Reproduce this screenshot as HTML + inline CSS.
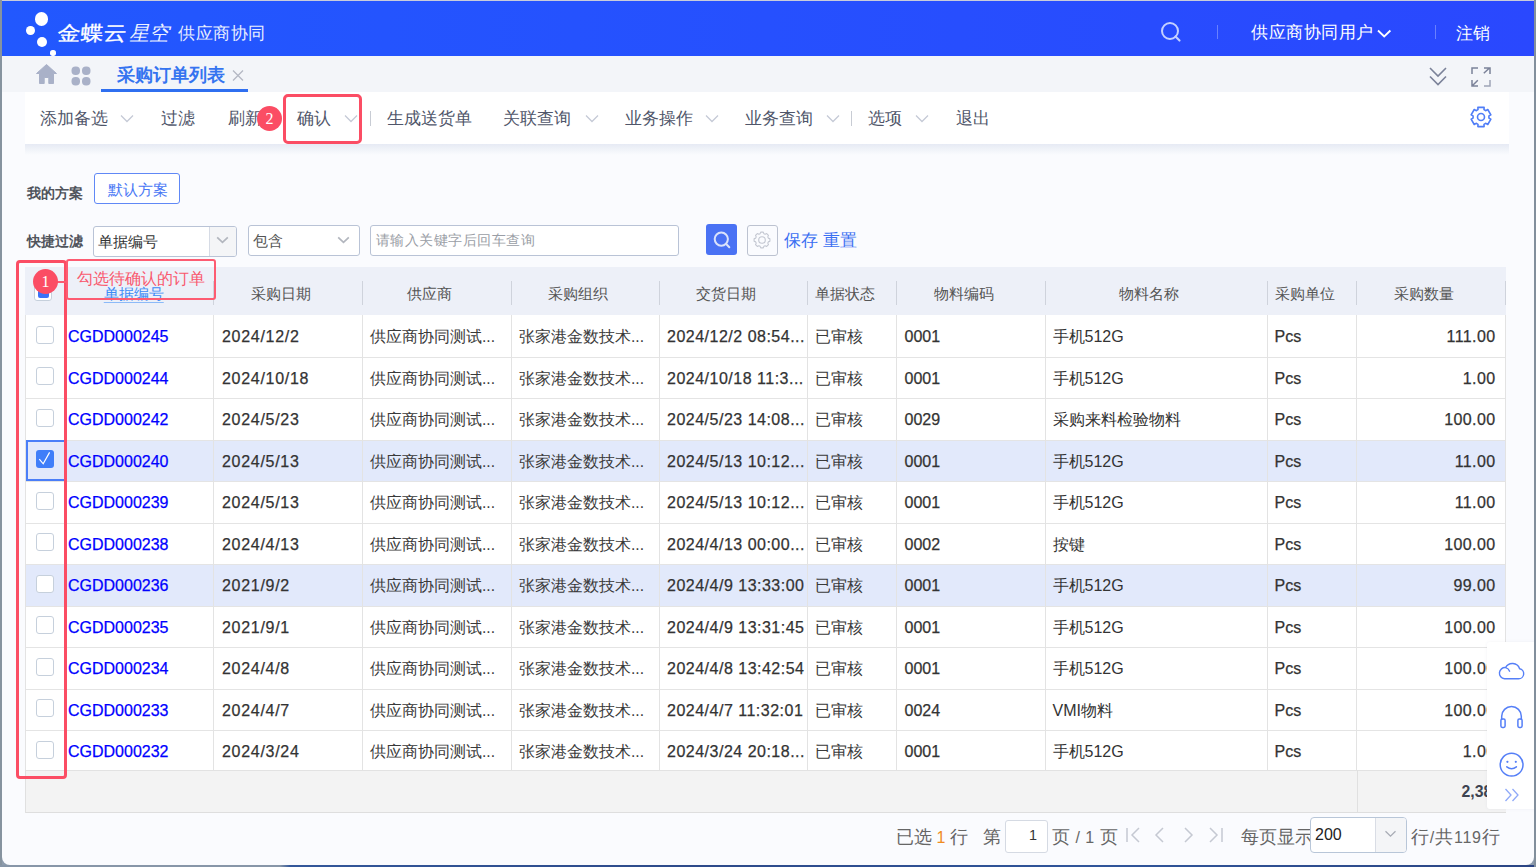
<!DOCTYPE html>
<html><head><meta charset="utf-8">
<style>
html,body{margin:0;padding:0;width:1536px;height:867px;overflow:hidden;}
body{background:#8e9cad;font-family:"Liberation Sans",sans-serif;color:#333;position:relative;}
.a{position:absolute;white-space:nowrap;}
#topstrip{left:0;top:0;width:1536px;height:1px;background:#c9ccdb;}
#leftstrip{left:0;top:0;width:2px;height:867px;background:#86939f;}
#win{left:2px;top:1px;width:1532px;height:864px;background:#fafbfe;border-radius:0 0 8px 8px;overflow:hidden;}
#hdr{left:2px;top:1px;width:1532px;height:55px;background:linear-gradient(90deg,#2258fe,#2a48fe);}
.dot{position:absolute;background:#fff;border-radius:50%;}
.wt{color:#fff;}
#tabbar{left:2px;top:56px;width:1532px;height:36px;background:#f3f5f9;}
#toolbar{left:25px;top:92px;width:1484px;height:52px;background:#fff;}
#tbshadow{left:25px;top:144px;width:1484px;height:11px;background:linear-gradient(180deg,#e6eaf4 0%,#eff2f8 45%,rgba(250,251,254,0) 100%);}
.tb{font-size:16.9px;line-height:20px;color:#50566a;top:108.5px;}
.chev{position:absolute;}
.th{top:283.5px;font-size:14.5px;line-height:20px;text-align:center;}
.td{font-size:15.7px;line-height:20px;}
.l16{font-size:16px;}
.lt{-webkit-text-stroke:0.25px currentColor;}
.pg{top:826.5px;font-size:17.5px;line-height:20px;color:#666;}
</style></head><body>
<div class="a" id="topstrip"></div>
<div class="a" id="leftstrip"></div>
<div class="a" id="win"></div>
<div class="a" id="hdr"></div>
<!-- logo -->
<div class="dot" style="left:34.7px;top:12.1px;width:13.6px;height:13.6px"></div>
<div class="dot" style="left:25.8px;top:26px;width:8.8px;height:8.8px"></div>
<div class="dot" style="left:36.6px;top:36.6px;width:10.2px;height:10.2px"></div>
<div class="dot" style="left:50.3px;top:50.2px;width:5.4px;height:5.4px"></div>
<div class="a wt" style="left:58px;top:21px;font-size:20px;line-height:24px;font-weight:500;-webkit-text-stroke:0.3px #fff;transform:scaleX(1.15) skewX(-5deg);transform-origin:0 50%">金蝶云</div>
<div class="a wt" style="left:129px;top:21px;font-size:20px;line-height:24px;font-style:italic;font-weight:300;color:#eef2ff">星空</div>
<div class="a" style="left:178px;top:21.5px;font-size:17.4px;line-height:22px;letter-spacing:0.6px;color:#e8eeff">供应商协同</div>
<!-- header right -->
<svg class="a" style="left:1158px;top:20px" width="26" height="24" viewBox="0 0 26 24"><circle cx="12" cy="11" r="8" fill="none" stroke="#c4d0ff" stroke-width="2"/><path d="M17.5 16.5 L21.5 20.5" stroke="#c4d0ff" stroke-width="2.2" stroke-linecap="round"/></svg>
<div class="a" style="left:1217px;top:25px;width:1px;height:14px;background:rgba(255,255,255,0.3)"></div>
<div class="a wt" style="left:1251px;top:21px;font-size:17.4px;line-height:22px;letter-spacing:0.5px">供应商协同用户</div>
<svg class="a" style="left:1376px;top:28px" width="17" height="11" viewBox="0 0 17 11"><path d="M2 2.5 L8.2 8.5 L14.4 2.5" fill="none" stroke="#fff" stroke-width="1.8"/></svg>
<div class="a" style="left:1435px;top:25px;width:1px;height:14px;background:rgba(255,255,255,0.3)"></div>
<div class="a wt" style="left:1456px;top:21.5px;font-size:17.3px;line-height:22px">注销</div>

<!-- tab bar -->
<div class="a" id="tabbar"></div>
<svg class="a" style="left:36px;top:64px" width="21" height="20" viewBox="0 0 21 20"><path d="M10.5 0.5 L20.5 9.5 L17.5 9.5 L17.5 19.5 L12.8 19.5 L12.8 13.5 L8.2 13.5 L8.2 19.5 L3.5 19.5 L3.5 9.5 L0.5 9.5 Z" fill="#a9b1c8" stroke="#a9b1c8" stroke-linejoin="round"/></svg>
<svg class="a" style="left:71px;top:65.5px" width="20" height="20" viewBox="0 0 20 20"><g fill="#a9b1c8"><rect x="0.5" y="0.5" width="8.5" height="8.5" rx="4"/><rect x="11" y="0.5" width="8.5" height="8.5" rx="4"/><rect x="0.5" y="11" width="8.5" height="8.5" rx="4"/><rect x="11" y="11" width="8.5" height="8.5" rx="4"/></g></svg>
<div class="a" style="left:117px;top:64px;font-size:18.2px;line-height:22px;font-weight:bold;color:#3574f0">采购订单列表</div>
<svg class="a" style="left:232px;top:70px" width="12" height="11" viewBox="0 0 12 11"><path d="M1 0.5 L11 10.5 M11 0.5 L1 10.5" stroke="#b4b8c4" stroke-width="1.3"/></svg>
<div class="a" style="left:101px;top:89px;width:147px;height:2.5px;background:#2f6ff0"></div>
<svg class="a" style="left:1429px;top:67px" width="18" height="19" viewBox="0 0 18 19"><path d="M1 1 L9 9 L17 1 M1 9.5 L9 17.5 L17 9.5" fill="none" stroke="#7b8299" stroke-width="1.6"/></svg>
<svg class="a" style="left:1471.2px;top:67.4px" width="20" height="20" viewBox="0 0 20 20"><g fill="none" stroke="#7b8299" stroke-width="1.5"><path d="M1 7 V1 H7 M13 1 H19 V7 M12.8 6.2 L18.2 1.2 M1 13 V19 H7 M1.8 18.2 L6.8 13.2"/><path d="M19 13 V19 H13" stroke="#9ea4b6"/></g></svg>

<!-- toolbar -->
<div class="a" id="tbshadow"></div>
<div class="a" id="toolbar"></div>
<div class="a tb" style="left:40px">添加备选</div>
<div class="a tb" style="left:161px">过滤</div>
<div class="a tb" style="left:228px">刷新</div>
<div class="a tb" style="left:297px">确认</div>
<div class="a" style="left:370px;top:111px;width:1px;height:15px;background:#c8ccd4"></div>
<div class="a tb" style="left:387px">生成送货单</div>
<div class="a tb" style="left:503px">关联查询</div>
<div class="a tb" style="left:625px">业务操作</div>
<div class="a tb" style="left:745px">业务查询</div>
<div class="a" style="left:851px;top:111px;width:1px;height:15px;background:#c8ccd4"></div>
<div class="a tb" style="left:868px">选项</div>
<div class="a tb" style="left:956px">退出</div>
<svg class="a" style="left:119.5px;top:113.5px" width="14" height="9" viewBox="0 0 14 9"><path d="M1 1.5 L7 7.5 L13 1.5" fill="none" stroke="#c5cad6" stroke-width="1.3"/></svg>
<svg class="a" style="left:344.0px;top:113.5px" width="14" height="9" viewBox="0 0 14 9"><path d="M1 1.5 L7 7.5 L13 1.5" fill="none" stroke="#c5cad6" stroke-width="1.3"/></svg>
<svg class="a" style="left:584.5px;top:113.5px" width="14" height="9" viewBox="0 0 14 9"><path d="M1 1.5 L7 7.5 L13 1.5" fill="none" stroke="#c5cad6" stroke-width="1.3"/></svg>
<svg class="a" style="left:704.5px;top:113.5px" width="14" height="9" viewBox="0 0 14 9"><path d="M1 1.5 L7 7.5 L13 1.5" fill="none" stroke="#c5cad6" stroke-width="1.3"/></svg>
<svg class="a" style="left:825.5px;top:113.5px" width="14" height="9" viewBox="0 0 14 9"><path d="M1 1.5 L7 7.5 L13 1.5" fill="none" stroke="#c5cad6" stroke-width="1.3"/></svg>
<svg class="a" style="left:914.5px;top:113.5px" width="14" height="9" viewBox="0 0 14 9"><path d="M1 1.5 L7 7.5 L13 1.5" fill="none" stroke="#c5cad6" stroke-width="1.3"/></svg>
<!--CHEVS-->
<!-- badge 2 + red box -->
<div class="a" style="left:283px;top:93.5px;width:73px;height:44.5px;border:3px solid #fb4d64;border-radius:5px"></div>
<div class="a" style="left:257px;top:106px;width:25px;height:25px;border-radius:50%;background:#fb4d64;color:#fff;font-family:'Liberation Serif',serif;font-size:16px;line-height:25px;text-align:center">2</div>
<!-- gear -->
<svg class="a" style="left:1468px;top:104.25px" width="26" height="26" viewBox="0 0 26 26"><path d="M22.88 15.10 L19.76 20.51 L17.93 19.30 L16.00 20.42 L16.12 22.61 L9.88 22.61 L10.00 20.42 L8.07 19.30 L6.24 20.51 L3.12 15.10 L5.08 14.11 L5.08 11.89 L3.12 10.90 L6.24 5.49 L8.07 6.70 L10.00 5.58 L9.88 3.39 L16.12 3.39 L16.00 5.58 L17.93 6.70 L19.76 5.49 L22.88 10.90 L20.92 11.89 L20.92 14.11 Z" fill="none" stroke="#4f7df7" stroke-width="1.6" stroke-linejoin="round"/><circle cx="13" cy="13" r="3.5" fill="none" stroke="#4f7df7" stroke-width="1.6"/></svg>

<!-- scheme -->
<div class="a" style="left:26.5px;top:182.5px;font-size:14px;line-height:20px;font-weight:bold;color:#50545c">我的方案</div>
<div class="a" style="left:94px;top:173px;width:84px;height:29px;border:1px solid #6088f6;border-radius:3px;background:#fff"></div>
<div class="a" style="left:107.5px;top:180px;font-size:14.6px;line-height:20px;color:#4a78f5">默认方案</div>
<!-- quick filter -->
<div class="a" style="left:26.5px;top:231px;font-size:14px;line-height:20px;font-weight:bold;color:#50545c">快捷过滤</div>
<div class="a" style="left:93px;top:226px;width:142px;height:29px;border:1px solid #b9c3d6;border-radius:3px;background:#fff;overflow:hidden"><div style="position:absolute;left:115px;top:0;width:27px;height:29px;background:#f4f5f7;border-left:1px solid #d6dbe5"></div></div>
<div class="a" style="left:98px;top:232px;font-size:14.6px;line-height:20px;color:#333">单据编号</div>
<svg class="a" style="left:216px;top:236px" width="13" height="8" viewBox="0 0 13 8"><path d="M1.2 1.3 L6.5 6.3 L11.8 1.3" fill="none" stroke="#b2b6be" stroke-width="1.7"/></svg>
<div class="a" style="left:248px;top:225px;width:110px;height:29px;border:1px solid #b9c3d6;border-radius:3px;background:#fff"></div>
<div class="a" style="left:253px;top:231px;font-size:14.6px;line-height:20px;color:#555">包含</div>
<svg class="a" style="left:337px;top:236px" width="13" height="8" viewBox="0 0 13 8"><path d="M1.2 1.3 L6.5 6.3 L11.8 1.3" fill="none" stroke="#b2b6be" stroke-width="1.7"/></svg>
<div class="a" style="left:370px;top:225px;width:307px;height:29px;border:1px solid #b9c3d6;border-radius:3px;background:#fff"></div>
<div class="a" style="left:375.5px;top:230px;font-size:14.1px;letter-spacing:0.5px;line-height:20px;color:#9a9ea6">请输入关键字后回车查询</div>
<div class="a" style="left:706.3px;top:224.4px;width:31px;height:31px;border-radius:3px;background:#4a72f4"></div>
<svg class="a" style="left:711px;top:229px" width="22" height="22" viewBox="0 0 22 22"><circle cx="10.3" cy="10.1" r="6.6" fill="none" stroke="#dbe3fb" stroke-width="2"/><path d="M15.2 15 L18.3 18.3" stroke="#dbe3fb" stroke-width="2" stroke-linecap="round"/></svg>
<div class="a" style="left:747px;top:224.5px;width:29px;height:29px;border:1.3px solid #bcc2d0;border-radius:3px;background:#fafbfe"></div>
<svg class="a" style="left:750.3px;top:228px" width="24" height="24" viewBox="0 0 24 24"><path d="M19.90 10.75 L19.90 13.25 L18.33 13.87 L17.80 15.15 L18.47 16.70 L16.70 18.47 L15.15 17.80 L13.87 18.33 L13.25 19.90 L10.75 19.90 L10.13 18.33 L8.85 17.80 L7.30 18.47 L5.53 16.70 L6.20 15.15 L5.67 13.87 L4.10 13.25 L4.10 10.75 L5.67 10.13 L6.20 8.85 L5.53 7.30 L7.30 5.53 L8.85 6.20 L10.13 5.67 L10.75 4.10 L13.25 4.10 L13.87 5.67 L15.15 6.20 L16.70 5.53 L18.47 7.30 L17.80 8.85 L18.33 10.13 Z" fill="none" stroke="#c3c7d1" stroke-width="1.1" stroke-linejoin="round"/><circle cx="12" cy="12" r="3.3" fill="none" stroke="#c3c7d1" stroke-width="1.1"/></svg>
<div class="a" style="left:783.5px;top:230px;font-size:17.1px;line-height:22px;color:#3a6ff2">保存</div>
<div class="a" style="left:822.5px;top:230px;font-size:17.1px;line-height:22px;color:#3a6ff2">重置</div>
<!--TABLE--><!-- table -->
<div class="a" style="left:25px;top:266.6px;width:1481px;height:48.599999999999966px;background:#edf0f8"></div>
<div class="a th" style="left:66.5px;width:134.5px;color:#3d8bf6;text-decoration:underline;text-decoration-color:#8cbaf8;text-underline-offset:3px;">单据编号</div>
<div class="a th" style="left:213.5px;width:134.0px;color:#555;">采购日期</div>
<div class="a th" style="left:362.5px;width:133.5px;color:#555;">供应商</div>
<div class="a th" style="left:511px;width:133.5px;color:#555;">采购组织</div>
<div class="a th" style="left:659.5px;width:133.0px;color:#555;">交货日期</div>
<div class="a th" style="left:807.5px;width:74.0px;color:#555;">单据状态</div>
<div class="a th" style="left:896.5px;width:134.0px;color:#555;">物料编码</div>
<div class="a th" style="left:1045.5px;width:207.0px;color:#555;">物料名称</div>
<div class="a th" style="left:1267.5px;width:74.0px;color:#555;">采购单位</div>
<div class="a th" style="left:1356.5px;width:134.0px;color:#555;">采购数量</div>
<div class="a" style="left:213.0px;top:280.6px;width:1px;height:24px;background:#cfd3dc"></div>
<div class="a" style="left:362.0px;top:280.6px;width:1px;height:24px;background:#cfd3dc"></div>
<div class="a" style="left:510.5px;top:280.6px;width:1px;height:24px;background:#cfd3dc"></div>
<div class="a" style="left:659.0px;top:280.6px;width:1px;height:24px;background:#cfd3dc"></div>
<div class="a" style="left:807.0px;top:280.6px;width:1px;height:24px;background:#cfd3dc"></div>
<div class="a" style="left:896.0px;top:280.6px;width:1px;height:24px;background:#cfd3dc"></div>
<div class="a" style="left:1045.0px;top:280.6px;width:1px;height:24px;background:#cfd3dc"></div>
<div class="a" style="left:1267.0px;top:280.6px;width:1px;height:24px;background:#cfd3dc"></div>
<div class="a" style="left:1356.0px;top:280.6px;width:1px;height:24px;background:#cfd3dc"></div>
<div class="a" style="left:1505.0px;top:280.6px;width:1px;height:24px;background:#cfd3dc"></div>
<div class="a" style="left:25px;top:315.2px;width:1481px;height:41.5px;background:#fff"></div>
<div class="a" style="left:25px;top:356.7px;width:1481px;height:41.5px;background:#fff"></div>
<div class="a" style="left:25px;top:398.2px;width:1481px;height:41.5px;background:#fff"></div>
<div class="a" style="left:25px;top:439.7px;width:1481px;height:41.5px;background:#e2e9fb"></div>
<div class="a" style="left:25px;top:481.2px;width:1481px;height:41.5px;background:#fff"></div>
<div class="a" style="left:25px;top:522.7px;width:1481px;height:41.5px;background:#fff"></div>
<div class="a" style="left:25px;top:564.2px;width:1481px;height:41.5px;background:#e2e9fb"></div>
<div class="a" style="left:25px;top:605.7px;width:1481px;height:41.5px;background:#fff"></div>
<div class="a" style="left:25px;top:647.2px;width:1481px;height:41.5px;background:#fff"></div>
<div class="a" style="left:25px;top:688.7px;width:1481px;height:41.5px;background:#fff"></div>
<div class="a" style="left:25px;top:730.2px;width:1481px;height:41.5px;background:#fff"></div>
<div class="a" style="left:25px;top:356.7px;width:1481px;height:1px;background:#e4e4e4"></div>
<div class="a" style="left:25px;top:398.2px;width:1481px;height:1px;background:#e4e4e4"></div>
<div class="a" style="left:25px;top:439.7px;width:1481px;height:1px;background:#e4e4e4"></div>
<div class="a" style="left:25px;top:481.2px;width:1481px;height:1px;background:#e4e4e4"></div>
<div class="a" style="left:25px;top:522.7px;width:1481px;height:1px;background:#e4e4e4"></div>
<div class="a" style="left:25px;top:564.2px;width:1481px;height:1px;background:#e4e4e4"></div>
<div class="a" style="left:25px;top:605.7px;width:1481px;height:1px;background:#e4e4e4"></div>
<div class="a" style="left:25px;top:647.2px;width:1481px;height:1px;background:#e4e4e4"></div>
<div class="a" style="left:25px;top:688.7px;width:1481px;height:1px;background:#e4e4e4"></div>
<div class="a" style="left:25px;top:730.2px;width:1481px;height:1px;background:#e4e4e4"></div>
<div class="a" style="left:25px;top:771.7px;width:1481px;height:1px;background:#e4e4e4"></div>
<div class="a" style="left:63.5px;top:315.2px;width:1px;height:456.5px;background:#e3e3e3"></div>
<div class="a" style="left:213.0px;top:315.2px;width:1px;height:456.5px;background:#e3e3e3"></div>
<div class="a" style="left:362.0px;top:315.2px;width:1px;height:456.5px;background:#e3e3e3"></div>
<div class="a" style="left:510.5px;top:315.2px;width:1px;height:456.5px;background:#e3e3e3"></div>
<div class="a" style="left:659.0px;top:315.2px;width:1px;height:456.5px;background:#e3e3e3"></div>
<div class="a" style="left:807.0px;top:315.2px;width:1px;height:456.5px;background:#e3e3e3"></div>
<div class="a" style="left:896.0px;top:315.2px;width:1px;height:456.5px;background:#e3e3e3"></div>
<div class="a" style="left:1045.0px;top:315.2px;width:1px;height:456.5px;background:#e3e3e3"></div>
<div class="a" style="left:1267.0px;top:315.2px;width:1px;height:456.5px;background:#e3e3e3"></div>
<div class="a" style="left:1356.0px;top:315.2px;width:1px;height:456.5px;background:#e3e3e3"></div>
<div class="a" style="left:1505.0px;top:315.2px;width:1px;height:456.5px;background:#e3e3e3"></div>
<div class="a" style="left:25px;top:315.2px;width:1px;height:497.5px;background:#e3e3e3"></div>
<div class="a td lt" style="left:68px;top:327.09999999999997px;color:#0000ff;font-size:16px;">CGDD000245</div>
<div class="a td lt" style="left:222.0px;top:327.09999999999997px;color:#333;letter-spacing:0.7px;font-size:16px;">2024/12/2</div>
<div class="a td" style="left:370.0px;top:327.09999999999997px;color:#3a3a3a;">供应商协同测试...</div>
<div class="a td" style="left:519px;top:327.09999999999997px;color:#3a3a3a;">张家港金数技术...</div>
<div class="a td lt" style="left:667.0px;top:327.09999999999997px;color:#333;letter-spacing:0.5px;font-size:16px;">2024/12/2 08:54...</div>
<div class="a td" style="left:815.0px;top:327.09999999999997px;color:#3a3a3a;">已审核</div>
<div class="a td lt" style="left:904.5px;top:327.09999999999997px;color:#333;font-size:16px;">0001</div>
<div class="a td" style="left:1052.5px;top:327.09999999999997px;color:#333;">手机<span class="l16">512G</span></div>
<div class="a td lt" style="left:1274.5px;top:327.09999999999997px;color:#333;font-size:16px;">Pcs</div>
<div class="a td lt" style="left:1356.5px;width:139.0px;text-align:right;top:327.09999999999997px;letter-spacing:0.4px;font-size:16px">111.00</div>
<div class="a" style="left:36px;top:325.95px;width:16px;height:16px;border-radius:3px;border:1px solid #c6d0dc;background:#fff"></div>
<div class="a td lt" style="left:68px;top:368.59999999999997px;color:#0000ff;font-size:16px;">CGDD000244</div>
<div class="a td lt" style="left:222.0px;top:368.59999999999997px;color:#333;letter-spacing:0.7px;font-size:16px;">2024/10/18</div>
<div class="a td" style="left:370.0px;top:368.59999999999997px;color:#3a3a3a;">供应商协同测试...</div>
<div class="a td" style="left:519px;top:368.59999999999997px;color:#3a3a3a;">张家港金数技术...</div>
<div class="a td lt" style="left:667.0px;top:368.59999999999997px;color:#333;letter-spacing:0.5px;font-size:16px;">2024/10/18 11:3...</div>
<div class="a td" style="left:815.0px;top:368.59999999999997px;color:#3a3a3a;">已审核</div>
<div class="a td lt" style="left:904.5px;top:368.59999999999997px;color:#333;font-size:16px;">0001</div>
<div class="a td" style="left:1052.5px;top:368.59999999999997px;color:#333;">手机<span class="l16">512G</span></div>
<div class="a td lt" style="left:1274.5px;top:368.59999999999997px;color:#333;font-size:16px;">Pcs</div>
<div class="a td lt" style="left:1356.5px;width:139.0px;text-align:right;top:368.59999999999997px;letter-spacing:0.4px;font-size:16px">1.00</div>
<div class="a" style="left:36px;top:367.45px;width:16px;height:16px;border-radius:3px;border:1px solid #c6d0dc;background:#fff"></div>
<div class="a td lt" style="left:68px;top:410.09999999999997px;color:#0000ff;font-size:16px;">CGDD000242</div>
<div class="a td lt" style="left:222.0px;top:410.09999999999997px;color:#333;letter-spacing:0.7px;font-size:16px;">2024/5/23</div>
<div class="a td" style="left:370.0px;top:410.09999999999997px;color:#3a3a3a;">供应商协同测试...</div>
<div class="a td" style="left:519px;top:410.09999999999997px;color:#3a3a3a;">张家港金数技术...</div>
<div class="a td lt" style="left:667.0px;top:410.09999999999997px;color:#333;letter-spacing:0.5px;font-size:16px;">2024/5/23 14:08...</div>
<div class="a td" style="left:815.0px;top:410.09999999999997px;color:#3a3a3a;">已审核</div>
<div class="a td lt" style="left:904.5px;top:410.09999999999997px;color:#333;font-size:16px;">0029</div>
<div class="a td" style="left:1052.5px;top:410.09999999999997px;color:#333;">采购来料检验物料</div>
<div class="a td lt" style="left:1274.5px;top:410.09999999999997px;color:#333;font-size:16px;">Pcs</div>
<div class="a td lt" style="left:1356.5px;width:139.0px;text-align:right;top:410.09999999999997px;letter-spacing:0.4px;font-size:16px">100.00</div>
<div class="a" style="left:36px;top:408.95px;width:16px;height:16px;border-radius:3px;border:1px solid #c6d0dc;background:#fff"></div>
<div class="a td lt" style="left:68px;top:451.59999999999997px;color:#0000ff;font-size:16px;">CGDD000240</div>
<div class="a td lt" style="left:222.0px;top:451.59999999999997px;color:#333;letter-spacing:0.7px;font-size:16px;">2024/5/13</div>
<div class="a td" style="left:370.0px;top:451.59999999999997px;color:#3a3a3a;">供应商协同测试...</div>
<div class="a td" style="left:519px;top:451.59999999999997px;color:#3a3a3a;">张家港金数技术...</div>
<div class="a td lt" style="left:667.0px;top:451.59999999999997px;color:#333;letter-spacing:0.5px;font-size:16px;">2024/5/13 10:12...</div>
<div class="a td" style="left:815.0px;top:451.59999999999997px;color:#3a3a3a;">已审核</div>
<div class="a td lt" style="left:904.5px;top:451.59999999999997px;color:#333;font-size:16px;">0001</div>
<div class="a td" style="left:1052.5px;top:451.59999999999997px;color:#333;">手机<span class="l16">512G</span></div>
<div class="a td lt" style="left:1274.5px;top:451.59999999999997px;color:#333;font-size:16px;">Pcs</div>
<div class="a td lt" style="left:1356.5px;width:139.0px;text-align:right;top:451.59999999999997px;letter-spacing:0.4px;font-size:16px">11.00</div>
<div class="a" style="left:25.5px;top:440.2px;width:36px;height:36.5px;border:2px solid #4a7ef8"></div>
<div class="a" style="left:36px;top:450.45px;width:18px;height:18px;border-radius:3px;background:#3f7ef9"></div>
<svg class="a" style="left:36px;top:450.45px" width="18" height="18" viewBox="0 0 18 18"><path d="M3.3 9.2 L7.2 13.8 L13.6 2.4" fill="none" stroke="#fff" stroke-width="1.2"/></svg>
<div class="a td lt" style="left:68px;top:493.09999999999997px;color:#0000ff;font-size:16px;">CGDD000239</div>
<div class="a td lt" style="left:222.0px;top:493.09999999999997px;color:#333;letter-spacing:0.7px;font-size:16px;">2024/5/13</div>
<div class="a td" style="left:370.0px;top:493.09999999999997px;color:#3a3a3a;">供应商协同测试...</div>
<div class="a td" style="left:519px;top:493.09999999999997px;color:#3a3a3a;">张家港金数技术...</div>
<div class="a td lt" style="left:667.0px;top:493.09999999999997px;color:#333;letter-spacing:0.5px;font-size:16px;">2024/5/13 10:12...</div>
<div class="a td" style="left:815.0px;top:493.09999999999997px;color:#3a3a3a;">已审核</div>
<div class="a td lt" style="left:904.5px;top:493.09999999999997px;color:#333;font-size:16px;">0001</div>
<div class="a td" style="left:1052.5px;top:493.09999999999997px;color:#333;">手机<span class="l16">512G</span></div>
<div class="a td lt" style="left:1274.5px;top:493.09999999999997px;color:#333;font-size:16px;">Pcs</div>
<div class="a td lt" style="left:1356.5px;width:139.0px;text-align:right;top:493.09999999999997px;letter-spacing:0.4px;font-size:16px">11.00</div>
<div class="a" style="left:36px;top:491.95px;width:16px;height:16px;border-radius:3px;border:1px solid #c6d0dc;background:#fff"></div>
<div class="a td lt" style="left:68px;top:534.6px;color:#0000ff;font-size:16px;">CGDD000238</div>
<div class="a td lt" style="left:222.0px;top:534.6px;color:#333;letter-spacing:0.7px;font-size:16px;">2024/4/13</div>
<div class="a td" style="left:370.0px;top:534.6px;color:#3a3a3a;">供应商协同测试...</div>
<div class="a td" style="left:519px;top:534.6px;color:#3a3a3a;">张家港金数技术...</div>
<div class="a td lt" style="left:667.0px;top:534.6px;color:#333;letter-spacing:0.5px;font-size:16px;">2024/4/13 00:00...</div>
<div class="a td" style="left:815.0px;top:534.6px;color:#3a3a3a;">已审核</div>
<div class="a td lt" style="left:904.5px;top:534.6px;color:#333;font-size:16px;">0002</div>
<div class="a td" style="left:1052.5px;top:534.6px;color:#333;">按键</div>
<div class="a td lt" style="left:1274.5px;top:534.6px;color:#333;font-size:16px;">Pcs</div>
<div class="a td lt" style="left:1356.5px;width:139.0px;text-align:right;top:534.6px;letter-spacing:0.4px;font-size:16px">100.00</div>
<div class="a" style="left:36px;top:533.45px;width:16px;height:16px;border-radius:3px;border:1px solid #c6d0dc;background:#fff"></div>
<div class="a td lt" style="left:68px;top:576.1px;color:#0000ff;font-size:16px;">CGDD000236</div>
<div class="a td lt" style="left:222.0px;top:576.1px;color:#333;letter-spacing:0.7px;font-size:16px;">2021/9/2</div>
<div class="a td" style="left:370.0px;top:576.1px;color:#3a3a3a;">供应商协同测试...</div>
<div class="a td" style="left:519px;top:576.1px;color:#3a3a3a;">张家港金数技术...</div>
<div class="a td lt" style="left:667.0px;top:576.1px;color:#333;letter-spacing:0.5px;font-size:16px;">2024/4/9 13:33:00</div>
<div class="a td" style="left:815.0px;top:576.1px;color:#3a3a3a;">已审核</div>
<div class="a td lt" style="left:904.5px;top:576.1px;color:#333;font-size:16px;">0001</div>
<div class="a td" style="left:1052.5px;top:576.1px;color:#333;">手机<span class="l16">512G</span></div>
<div class="a td lt" style="left:1274.5px;top:576.1px;color:#333;font-size:16px;">Pcs</div>
<div class="a td lt" style="left:1356.5px;width:139.0px;text-align:right;top:576.1px;letter-spacing:0.4px;font-size:16px">99.00</div>
<div class="a" style="left:36px;top:574.95px;width:16px;height:16px;border-radius:3px;border:1px solid #c6d0dc;background:#fff"></div>
<div class="a td lt" style="left:68px;top:617.6px;color:#0000ff;font-size:16px;">CGDD000235</div>
<div class="a td lt" style="left:222.0px;top:617.6px;color:#333;letter-spacing:0.7px;font-size:16px;">2021/9/1</div>
<div class="a td" style="left:370.0px;top:617.6px;color:#3a3a3a;">供应商协同测试...</div>
<div class="a td" style="left:519px;top:617.6px;color:#3a3a3a;">张家港金数技术...</div>
<div class="a td lt" style="left:667.0px;top:617.6px;color:#333;letter-spacing:0.5px;font-size:16px;">2024/4/9 13:31:45</div>
<div class="a td" style="left:815.0px;top:617.6px;color:#3a3a3a;">已审核</div>
<div class="a td lt" style="left:904.5px;top:617.6px;color:#333;font-size:16px;">0001</div>
<div class="a td" style="left:1052.5px;top:617.6px;color:#333;">手机<span class="l16">512G</span></div>
<div class="a td lt" style="left:1274.5px;top:617.6px;color:#333;font-size:16px;">Pcs</div>
<div class="a td lt" style="left:1356.5px;width:139.0px;text-align:right;top:617.6px;letter-spacing:0.4px;font-size:16px">100.00</div>
<div class="a" style="left:36px;top:616.45px;width:16px;height:16px;border-radius:3px;border:1px solid #c6d0dc;background:#fff"></div>
<div class="a td lt" style="left:68px;top:659.1px;color:#0000ff;font-size:16px;">CGDD000234</div>
<div class="a td lt" style="left:222.0px;top:659.1px;color:#333;letter-spacing:0.7px;font-size:16px;">2024/4/8</div>
<div class="a td" style="left:370.0px;top:659.1px;color:#3a3a3a;">供应商协同测试...</div>
<div class="a td" style="left:519px;top:659.1px;color:#3a3a3a;">张家港金数技术...</div>
<div class="a td lt" style="left:667.0px;top:659.1px;color:#333;letter-spacing:0.5px;font-size:16px;">2024/4/8 13:42:54</div>
<div class="a td" style="left:815.0px;top:659.1px;color:#3a3a3a;">已审核</div>
<div class="a td lt" style="left:904.5px;top:659.1px;color:#333;font-size:16px;">0001</div>
<div class="a td" style="left:1052.5px;top:659.1px;color:#333;">手机<span class="l16">512G</span></div>
<div class="a td lt" style="left:1274.5px;top:659.1px;color:#333;font-size:16px;">Pcs</div>
<div class="a td lt" style="left:1356.5px;width:139.0px;text-align:right;top:659.1px;letter-spacing:0.4px;font-size:16px">100.00</div>
<div class="a" style="left:36px;top:657.95px;width:16px;height:16px;border-radius:3px;border:1px solid #c6d0dc;background:#fff"></div>
<div class="a td lt" style="left:68px;top:700.6px;color:#0000ff;font-size:16px;">CGDD000233</div>
<div class="a td lt" style="left:222.0px;top:700.6px;color:#333;letter-spacing:0.7px;font-size:16px;">2024/4/7</div>
<div class="a td" style="left:370.0px;top:700.6px;color:#3a3a3a;">供应商协同测试...</div>
<div class="a td" style="left:519px;top:700.6px;color:#3a3a3a;">张家港金数技术...</div>
<div class="a td lt" style="left:667.0px;top:700.6px;color:#333;letter-spacing:0.5px;font-size:16px;">2024/4/7 11:32:01</div>
<div class="a td" style="left:815.0px;top:700.6px;color:#3a3a3a;">已审核</div>
<div class="a td lt" style="left:904.5px;top:700.6px;color:#333;font-size:16px;">0024</div>
<div class="a td" style="left:1052.5px;top:700.6px;color:#333;"><span class="l16">VMI</span>物料</div>
<div class="a td lt" style="left:1274.5px;top:700.6px;color:#333;font-size:16px;">Pcs</div>
<div class="a td lt" style="left:1356.5px;width:139.0px;text-align:right;top:700.6px;letter-spacing:0.4px;font-size:16px">100.00</div>
<div class="a" style="left:36px;top:699.45px;width:16px;height:16px;border-radius:3px;border:1px solid #c6d0dc;background:#fff"></div>
<div class="a td lt" style="left:68px;top:742.1px;color:#0000ff;font-size:16px;">CGDD000232</div>
<div class="a td lt" style="left:222.0px;top:742.1px;color:#333;letter-spacing:0.7px;font-size:16px;">2024/3/24</div>
<div class="a td" style="left:370.0px;top:742.1px;color:#3a3a3a;">供应商协同测试...</div>
<div class="a td" style="left:519px;top:742.1px;color:#3a3a3a;">张家港金数技术...</div>
<div class="a td lt" style="left:667.0px;top:742.1px;color:#333;letter-spacing:0.5px;font-size:16px;">2024/3/24 20:18...</div>
<div class="a td" style="left:815.0px;top:742.1px;color:#3a3a3a;">已审核</div>
<div class="a td lt" style="left:904.5px;top:742.1px;color:#333;font-size:16px;">0001</div>
<div class="a td" style="left:1052.5px;top:742.1px;color:#333;">手机<span class="l16">512G</span></div>
<div class="a td lt" style="left:1274.5px;top:742.1px;color:#333;font-size:16px;">Pcs</div>
<div class="a td lt" style="left:1356.5px;width:139.0px;text-align:right;top:742.1px;letter-spacing:0.4px;font-size:16px">1.00</div>
<div class="a" style="left:36px;top:740.95px;width:16px;height:16px;border-radius:3px;border:1px solid #c6d0dc;background:#fff"></div>
<div class="a" style="left:34px;top:282.5px;width:16px;height:16px;border-radius:3px;border:1px solid #c6d0dc;background:#fff"></div>
<div class="a" style="left:38.3px;top:286.5px;width:11px;height:11px;border-radius:2px;background:#3a72f8"></div>
<div class="a" style="left:25px;top:770.2px;width:1481px;height:41px;background:#f3f3f3;border-top:1px solid #e2e2e2;border-bottom:1px solid #dedede"></div>
<div class="a" style="left:25px;top:770.2px;width:1px;height:43px;background:#e0e0e0"></div>
<div class="a" style="left:1356.5px;top:770.2px;width:1px;height:42px;background:#e0e0e0"></div>
<div class="a td" style="left:1461.5px;top:781.7px;font-weight:bold;font-size:15.8px;color:#3d4350">2,383.00</div>
<!--ENDTABLE-->


<!-- pagination -->
<div class="a pg" style="left:896px">已选<span class="l16"> <span style="color:#f08c1e">1</span> </span>行</div>
<div class="a pg" style="left:983px">第</div>
<div class="a" style="left:1005px;top:819.5px;width:41px;height:31px;border:1px solid #d5dae3;border-radius:3px;background:#fff"></div>
<div class="a pg" style="left:1005px;width:32px;text-align:right;top:825px;color:#333;font-size:14.4px">1</div>
<div class="a pg" style="left:1052px;letter-spacing:0.5px">页<span class="l16"> / 1 </span>页</div>
<svg class="a" style="left:1124px;top:826px" width="104" height="18" viewBox="0 0 104 18"><g fill="none" stroke="#c5c9d2" stroke-width="1.5"><path d="M3 2 V16 M15 2 L8 9 L15 16"/><path d="M39 2 L32 9 L39 16"/><path d="M61 2 L68 9 L61 16"/><path d="M86 2 L93 9 L86 16 M98 2 V16"/></g></svg>
<div class="a pg" style="left:1241px">每页显示</div>
<div class="a" style="left:1309.5px;top:816.5px;width:95px;height:34px;border:1px solid #b8c6d8;border-radius:4px;background:#fff;overflow:hidden"><div style="position:absolute;left:64px;top:0;width:31px;height:34px;background:#f4f5f7;border-left:1px solid #d9dde5"></div></div>
<div class="a" style="left:1315px;top:825px;font-size:16px;line-height:20px;color:#222">200</div>
<svg class="a" style="left:1384px;top:830px" width="13" height="8" viewBox="0 0 13 8"><path d="M1.5 1.2 L6.5 6.2 L11.5 1.2" fill="none" stroke="#a8acb5" stroke-width="1.3"/></svg>
<div class="a pg" style="left:1411px;letter-spacing:0.8px">行<span class="l16">/</span>共<span class="l16">119</span>行</div>

<!-- floating panel -->
<div class="a" style="left:1486.5px;top:642px;width:60px;height:166.7px;background:#fff;border-radius:3px;box-shadow:0 0 3px rgba(120,130,160,0.10)"></div>
<svg class="a" style="left:1497px;top:657px" width="28" height="26" viewBox="0 0 28 26"><path d="M7.5 21.8 H21.5 A5.1 5.1 0 0 0 22.6 11.7 A7.6 7.6 0 0 0 8.6 10.6 A5.6 5.6 0 0 0 7.5 21.8 Z M8.6 10.6 A5.6 5.6 0 0 1 12.6 14.2" fill="none" stroke="#557ff7" stroke-width="1.4" stroke-linejoin="round" stroke-linecap="round"/></svg>
<svg class="a" style="left:1498px;top:703px" width="27" height="27" viewBox="0 0 27 27"><path d="M3.7 17 V13.3 A9.8 9.8 0 0 1 23.3 13.3 V17" fill="none" stroke="#557ff7" stroke-width="1.5"/><rect x="2.9" y="16" width="4.2" height="8.5" rx="1.4" fill="none" stroke="#557ff7" stroke-width="1.5"/><rect x="19.9" y="16" width="4.2" height="8.5" rx="1.4" fill="none" stroke="#557ff7" stroke-width="1.5"/></svg>
<svg class="a" style="left:1497px;top:750px" width="29" height="29" viewBox="0 0 29 29"><circle cx="14.6" cy="14.7" r="11.4" fill="none" stroke="#557ff7" stroke-width="1.5"/><circle cx="10.4" cy="11.8" r="1.1" fill="#557ff7"/><circle cx="18.8" cy="11.8" r="1.1" fill="#557ff7"/><path d="M9.8 16.8 Q14.6 20.6 19.4 16.8" fill="none" stroke="#557ff7" stroke-width="1.5" stroke-linecap="round"/></svg>
<svg class="a" style="left:1503px;top:787px" width="18" height="16" viewBox="0 0 18 16"><path d="M2.5 2 L8 8 L2.5 14 M9.5 2 L15 8 L9.5 14" fill="none" stroke="#8fa9f8" stroke-width="1.3"/></svg>

<!-- annotation 1 -->
<div class="a" style="left:16px;top:260.3px;width:45px;height:512.5px;border:3px solid #fb4d64;border-radius:4px"></div>
<div class="a" style="left:65.5px;top:259.3px;width:146px;height:36.6px;border:2px solid #fd5c72;border-radius:3px"></div>
<div class="a" style="left:57px;top:280.5px;width:9px;height:2px;background:#fb5b70"></div>
<div class="a" style="left:32.8px;top:268.5px;width:25.2px;height:25.2px;border-radius:50%;background:#fb4d64;color:#fff;font-family:'Liberation Serif',serif;font-size:16px;line-height:25px;text-align:center">1</div>
<div class="a" style="left:77px;top:269px;font-size:16px;line-height:20px;color:#f9586e">勾选待确认的订单</div>
<!-- window bottom frame -->
<div class="a" style="left:0;top:865px;width:1536px;height:2px;background:linear-gradient(90deg,#8796a8 0,#8796a8 280px,#33579a 290px,#2d4a8a 700px,#30559a 1100px,#2b4584 1536px)"></div>
<div class="a" style="left:1534px;top:0;width:2px;height:867px;background:#828f9c"></div>
</body></html>
